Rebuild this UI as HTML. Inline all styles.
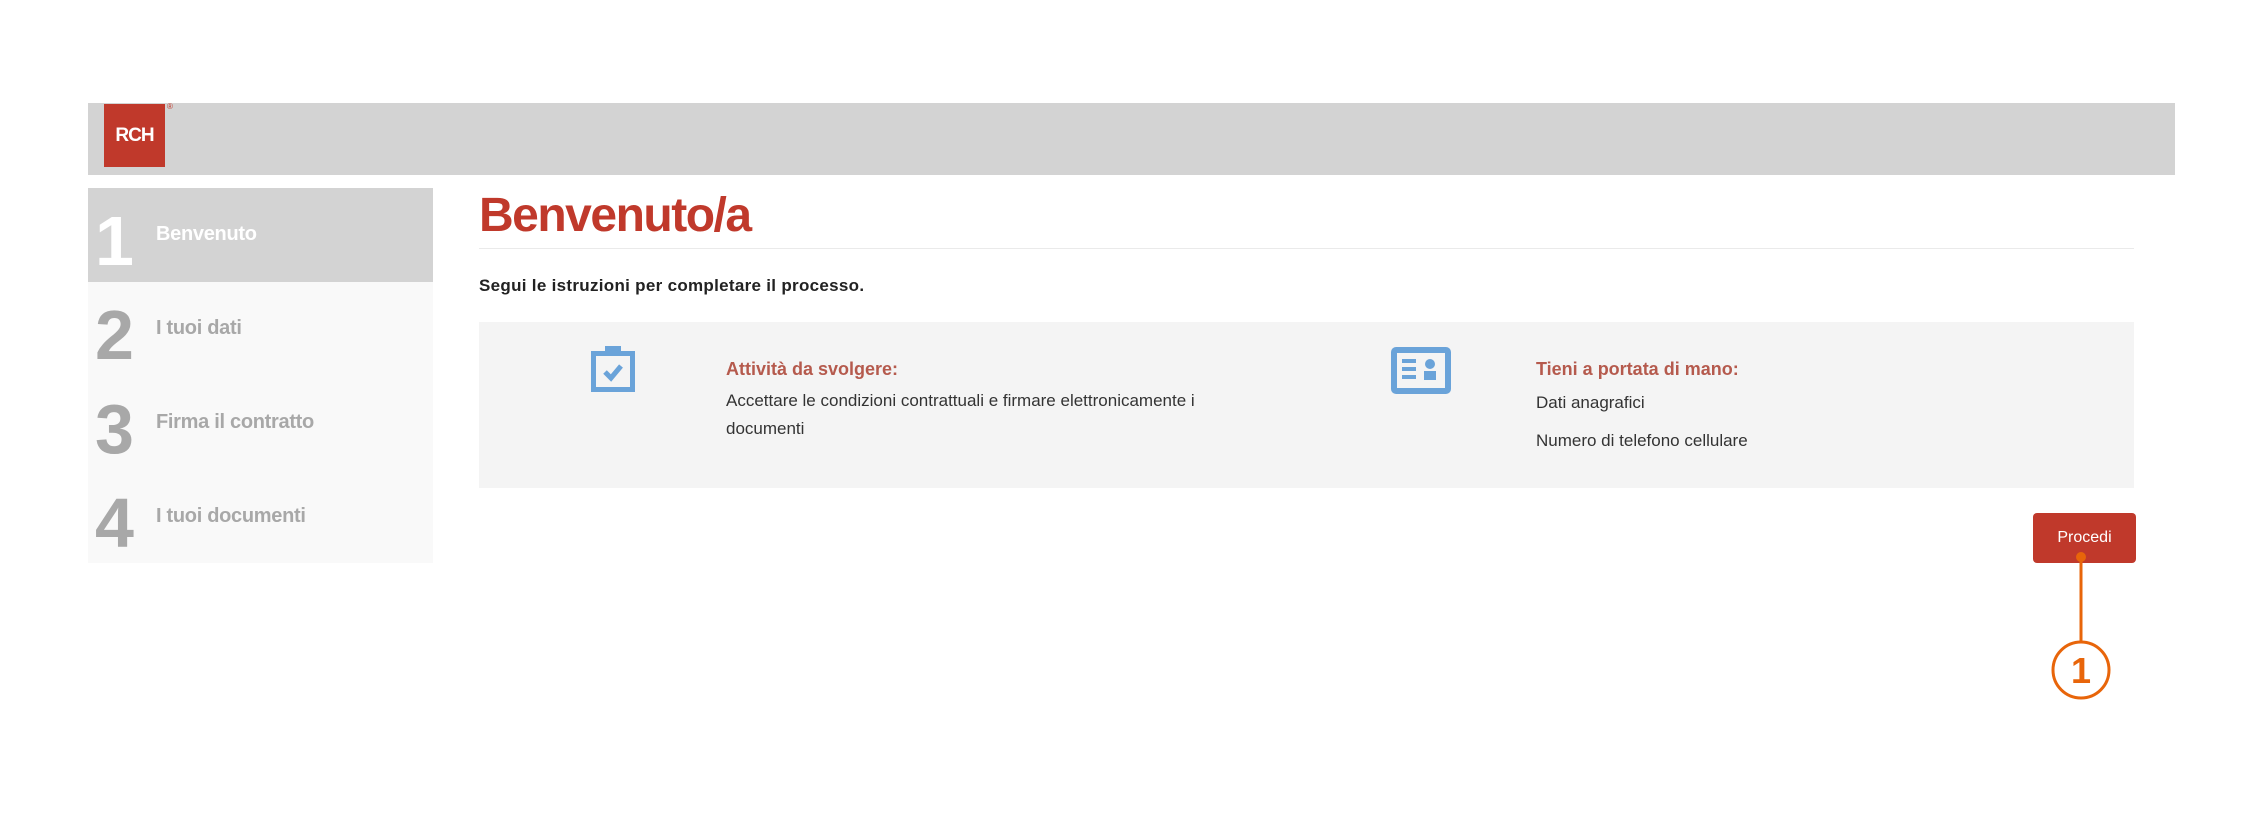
<!DOCTYPE html>
<html><head><meta charset="utf-8"><style>
*{margin:0;padding:0;box-sizing:border-box}
body{width:2264px;height:827px;background:#fff;position:relative;font-family:"Liberation Sans",sans-serif;overflow:hidden}
.a{position:absolute}
.num{position:absolute;left:7px;font-size:70px;font-weight:bold;color:#a8a8a8;line-height:1}
.lab{position:absolute;left:68px;font-size:20px;font-weight:bold;color:#a8a8a8;letter-spacing:-0.3px}
.item{position:absolute;left:0;width:345px;height:94px}
</style></head><body>
<div class="a" style="left:88px;top:103px;width:2087px;height:72px;background:#d3d3d3"></div>
<div class="a" style="left:104px;top:104px;width:61px;height:63px;background:#c0392b;color:#fff;font-weight:bold;font-size:19px;letter-spacing:-1px;text-align:center;line-height:63px">RCH</div>
<div class="a" style="left:167px;top:102px;font-size:8px;color:#c0392b">®</div>

<div class="a" style="left:88px;top:188px;width:345px;height:375px;background:#f9f9f9">
 <div class="item" style="top:0;background:#d3d3d3"><div class="num" style="top:18px;color:#fff">1</div><div class="lab" style="top:35px;color:#fff">Benvenuto</div></div>
 <div class="item" style="top:94px"><div class="num" style="top:18px">2</div><div class="lab" style="top:35px">I tuoi dati</div></div>
 <div class="item" style="top:188px"><div class="num" style="top:18px">3</div><div class="lab" style="top:35px">Firma il contratto</div></div>
 <div class="item" style="top:282px"><div class="num" style="top:18px">4</div><div class="lab" style="top:35px">I tuoi documenti</div></div>
</div>

<div class="a" style="left:479px;top:188px;font-size:48px;font-weight:bold;color:#c0392b;letter-spacing:-1.5px">Benvenuto/a</div>
<div class="a" style="left:479px;top:248px;width:1655px;height:1px;background:#eaeaea"></div>
<div class="a" style="left:479px;top:276px;font-size:17px;font-weight:bold;color:#222;letter-spacing:0.3px">Segui le istruzioni per completare il processo.</div>

<div class="a" style="left:479px;top:322px;width:1655px;height:166px;background:#f4f4f4"></div>
<svg class="a" style="left:589px;top:346px" width="48" height="48" viewBox="0 0 48 48">
 <rect x="2" y="5" width="44" height="41" fill="#6aa3d9"/>
 <rect x="7" y="10" width="34" height="31" fill="#f4f4f4"/>
 <rect x="16" y="0" width="16" height="8" fill="#6aa3d9"/>
 <path d="M16 26 L22 32 L32 20" stroke="#6aa3d9" stroke-width="5" fill="none"/>
</svg>
<div class="a" style="left:726px;top:359px;font-size:18px;font-weight:bold;color:#b55a4d">Attività da svolgere:</div>
<div class="a" style="left:726px;top:387px;width:545px;font-size:17px;line-height:28px;color:#333">Accettare le condizioni contrattuali e firmare elettronicamente i documenti</div>

<svg class="a" style="left:1391px;top:347px" width="60" height="47" viewBox="0 0 60 47">
 <rect x="0" y="0" width="60" height="47" rx="5" fill="#6aa3d9"/>
 <rect x="6" y="6" width="48" height="35" fill="#f4f4f4"/>
 <rect x="11" y="12" width="14" height="4" fill="#6aa3d9"/>
 <rect x="11" y="20" width="14" height="4" fill="#6aa3d9"/>
 <rect x="11" y="28" width="14" height="4" fill="#6aa3d9"/>
 <circle cx="39" cy="17" r="5" fill="#6aa3d9"/>
 <rect x="33" y="24" width="12" height="9" fill="#6aa3d9"/>
</svg>
<div class="a" style="left:1536px;top:359px;font-size:18px;font-weight:bold;color:#b55a4d">Tieni a portata di mano:</div>
<div class="a" style="left:1536px;top:393px;font-size:17px;color:#333">Dati anagrafici</div>
<div class="a" style="left:1536px;top:431px;font-size:17px;color:#333">Numero di telefono cellulare</div>

<div class="a" style="left:2033px;top:513px;width:103px;height:50px;background:#c0392b;border-radius:4px;color:#fff;font-size:16px;text-align:center;line-height:50px">Procedi</div>
<svg class="a" style="left:2040px;top:545px" width="84" height="160" viewBox="0 0 84 160">
 <circle cx="41" cy="12" r="5" fill="#e8650a"/>
 <line x1="41" y1="12" x2="41" y2="97" stroke="#e8650a" stroke-width="3"/>
 <circle cx="41" cy="125" r="28" fill="#fff" stroke="#e8650a" stroke-width="3"/>
 <text x="41" y="138" text-anchor="middle" font-family="Liberation Sans" font-weight="bold" font-size="36" fill="#e8650a">1</text>
</svg>
</body></html>
